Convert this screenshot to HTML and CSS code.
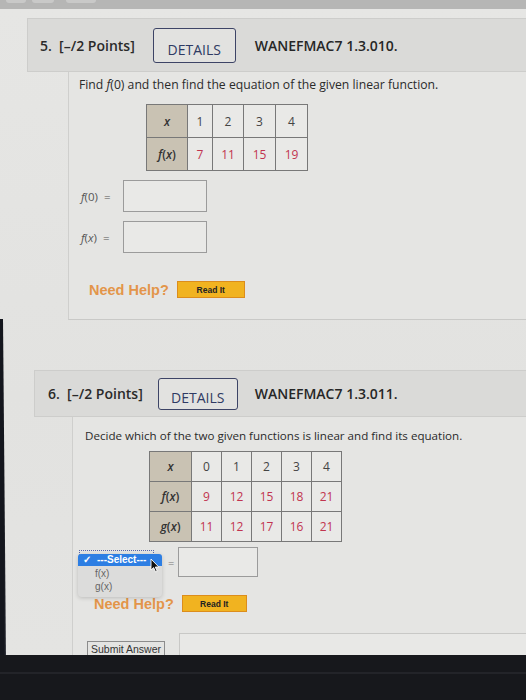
FILE: index.html
```html
<!DOCTYPE html>
<html>
<head>
<meta charset="utf-8">
<link rel="stylesheet" href="styles.css">
</head>
<body>
<div class="screen">
  <div class="topbar">
    <span class="tab t1"></span><span class="tab t2"></span><span class="tab t3"></span>
  </div>
  <div class="page">
    <section class="q q5">
      <div class="qhead">
        <span class="qnum">5.&nbsp; [–/2 Points]</span>
        <span class="details">DETAILS</span>
        <span class="qcode">WANEFMAC7 1.3.010.</span>
      </div>
      <div class="qbody">
        <p class="prompt">Find <i>f</i>(0) and then find the equation of the given linear function.</p>
        <table class="data t5">
          <tr><th><i>x</i></th><td class="n">1</td><td class="n">2</td><td class="n">3</td><td class="n">4</td></tr>
          <tr><th><i>f</i>(<i>x</i>)</th><td>7</td><td>11</td><td>15</td><td>19</td></tr>
        </table>
        <div class="answer a1"><span class="lbl"><i>f</i>(0)&nbsp; =</span><span class="box"></span></div>
        <div class="answer a2"><span class="lbl"><i>f</i>(<i>x</i>)&nbsp; =</span><span class="box"></span></div>
        <div class="help"><span class="need">Need Help?</span><span class="readit">Read It</span></div>
      </div>
    </section>

    <section class="q q6">
      <div class="qhead">
        <span class="qnum">6.&nbsp; [–/2 Points]</span>
        <span class="details">DETAILS</span>
        <span class="qcode">WANEFMAC7 1.3.011.</span>
      </div>
      <div class="qbody">
        <p class="prompt">Decide which of the two given functions is linear and find its equation.</p>
        <table class="data t6">
          <tr><th><i>x</i></th><td class="n">0</td><td class="n">1</td><td class="n">2</td><td class="n">3</td><td class="n">4</td></tr>
          <tr><th><i>f</i>(<i>x</i>)</th><td>9</td><td>12</td><td>15</td><td>18</td><td>21</td></tr>
          <tr><th><i>g</i>(<i>x</i>)</th><td>11</td><td>12</td><td>17</td><td>16</td><td>21</td></tr>
        </table>
        <div class="selrow">
          <span class="selbox">
            <span class="menu">
              <span class="opt sel"><span class="chk">✓</span>---Select---
                <svg class="cursor" width="10" height="15" viewBox="0 0 10 15"><path d="M1 1 L1 12 L3.6 9.6 L5.6 14 L7.2 13.3 L5.3 9 L8.8 9 Z" fill="#111" stroke="#fff" stroke-width="0.9"/></svg>
              </span>
              <span class="opt">f(x)</span>
              <span class="opt">g(x)</span>
            </span>
          </span>
          <span class="eq">=</span>
          <span class="box wide"></span>
        </div>
        <div class="help"><span class="need">Need Help?</span><span class="readit">Read It</span></div>
        <div class="submitrow">
          <span class="submit">Submit Answer</span>
          <span class="notes"></span>
        </div>
      </div>
    </section>
    <span class="leftedge"></span>
  </div>
  <div class="bezel"><span class="bezline"></span></div>
</div>
</body>
</html>
```

FILE: styles.css
```css
html, body {
  margin: 0;
  padding: 0;
  background: #17181c;
}
.screen {
  width: 526px;
  height: 700px;
  overflow: hidden;
  display: flex;
  flex-direction: column;
}
.topbar {
  height: 9px;
  background: #b6b6b5;
  display: flex;
  gap: 6px;
  padding-left: 6px;
  flex-shrink: 0;
}
.tab {
  height: 3px;
  background: #c9c9c8;
  border-radius: 0 0 4px 4px;
}
.t1 { width: 20px; }
.t2 { width: 22px; }
.t3 { width: 30px; margin-left: 6px; }
.page {
  position: relative;
  height: 646px;
  flex-shrink: 0;
  overflow: hidden;
  background: linear-gradient(#e6e6e4, #e2e2e0 60%, #e4e4e2);
  padding-top: 9px;
  box-sizing: border-box;
  font-family: "Open Sans", "Noto Sans", sans-serif;
  color: #222;
}
.leftedge {
  position: absolute;
  left: 0;
  top: 310px;
  bottom: 0;
  width: 6px;
  background: linear-gradient(to right, #14161d 70%, #3a3c44);
  clip-path: polygon(0 0, 50% 0, 100% 100%, 0 100%);
}
.q { display: flex; flex-direction: column; }
.qhead {
  display: flex;
  align-items: center;
  background: #dadad8;
  border: 1px solid #cdcdcb;
  border-right: none;
  box-sizing: border-box;
}
.q5 .qhead { margin-left: 27px; height: 54px; padding-left: 12px; }
.q6 { margin-top: 50px; }
.q6 .qhead { margin-left: 34px; height: 47px; padding-left: 13px; }
.qnum {
  font-weight: 600;
  font-size: 14px;
  color: #2a2a2a;
}
.details {
  margin-left: 18px;
  border: 1.5px solid #3d4466;
  border-radius: 3px;
  background: #e2e2e0;
  color: #2f3a63;
  font-size: 14px;
  width: 80px;
  height: 32px;
  box-sizing: border-box;
  display: flex;
  justify-content: center;
  align-items: flex-end;
  padding-bottom: 2px;
}
.q5 .details { height: 35px; width: 83px; padding-bottom: 3px; }
.q6 .details { margin-left: 15px; }
.qcode {
  margin-left: 19px;
  font-weight: 600;
  font-size: 14px;
  color: #262626;
}
.q6 .qcode { margin-left: 17px; }
.qbody {
  border-left: 1px solid #cfcfcd;
  border-bottom: 1px solid #c9c9c7;
  box-sizing: border-box;
  display: flex;
  flex-direction: column;
  align-items: flex-start;
  background: #e5e5e3;
}
.q5 .qbody { margin-left: 68px; height: 248px; }
.q6 .qbody { margin-left: 72px; height: 260px; border-bottom: none; }
.prompt {
  margin: 0;
  font-size: 12.2px;
  color: #2b2b2b;
}
.q5 .prompt { margin: 4px 0 0 10px; }
.q6 .prompt { margin: 11px 0 0 12px; font-size: 11.6px; }
.data {
  border-collapse: collapse;
  font-size: 12px;
}
.data th, .data td {
  border: 1px solid #787878;
  text-align: center;
  padding: 0;
  font-weight: normal;
}
.data th {
  background: #c9c2b3;
  font-weight: 600;
  color: #333;
}
.data td { background: #e9e9e7; color: #c1344f; }
.data td.n { color: #444; }
.t5 { margin: 11px 0 0 77px; }
.t5 th { width: 40px; height: 32px; }
.t5 td { height: 32px; }
.t5 td:nth-child(2) { width: 24px; }
.t5 td:nth-child(3) { width: 30px; }
.t5 td:nth-child(4) { width: 31px; }
.t5 td:nth-child(5) { width: 31px; }
.t6 { margin: 8px 0 0 76px; }
.t6 th { width: 41px; height: 29px; }
.t6 td { width: 29px; height: 29px; }
.answer {
  display: flex;
  align-items: center;
  margin-left: 12px;
}
.a1 { margin-top: 9px; }
.a2 { margin-top: 9px; }
.lbl {
  width: 42px;
  font-size: 11.5px;
  color: #555;
}
.box {
  width: 84px;
  height: 32px;
  border: 1px solid #9b9b9b;
  background: #e9e9e7;
  box-sizing: border-box;
}
.help {
  display: flex;
  align-items: center;
  gap: 8px;
}
.q5 .help { margin: 28px 0 0 20px; }
.q6 .help { margin: 18px 0 0 21px; }
.need {
  font-family: "Liberation Sans", Arial, sans-serif;
  font-weight: bold;
  font-size: 14.5px;
  color: #e3954a;
}
.readit {
  width: 68px;
  height: 17px;
  box-sizing: border-box;
  background: #f1b320;
  border: 1.5px solid #dc8d1c;
  font-family: "Liberation Sans", Arial, sans-serif;
  font-weight: bold;
  font-size: 8.5px;
  color: #222;
  display: flex;
  align-items: center;
  justify-content: center;
}
.q6 .readit { width: 65px; }
.selrow {
  display: flex;
  align-items: center;
  margin: 5px 0 0 6px;
  position: relative;
}
.selbox {
  width: 75px;
  height: 25px;
  border: 1.5px dotted #5966a8;
  box-sizing: border-box;
  position: relative;
}
.menu {
  position: absolute;
  left: -2px;
  top: 3px;
  width: 84px;
  background: #dcdcdb;
  border-radius: 4px;
  box-shadow: 0 1px 4px rgba(0,0,0,0.18);
  display: flex;
  flex-direction: column;
  font-family: "Liberation Sans", Arial, sans-serif;
  font-size: 10px;
  color: #666;
  padding-bottom: 4px;
  z-index: 2;
}
.opt {
  height: 13px;
  line-height: 13px;
  padding-left: 17px;
  position: relative;
}
.opt.sel {
  background: #2d7ee3;
  color: #fff;
  font-weight: bold;
  border-radius: 3px 3px 0 0;
  padding-left: 19px;
  height: 12px;
  line-height: 12px;
  margin-bottom: 1px;
}
.chk {
  position: absolute;
  left: 5px;
  top: 0;
  font-size: 10px;
}
.cursor {
  position: absolute;
  right: 2px;
  top: 4px;
}
.eq {
  margin-left: 14px;
  font-size: 11px;
  color: #777;
}
.box.wide {
  margin-left: 4px;
  width: 80px;
  height: 30px;
}
.submitrow {
  display: flex;
  align-items: flex-start;
  margin-top: 19px;
  width: 100%;
}
.submit {
  margin: 10px 0 0 14px;
  font-family: "Liberation Sans", Arial, sans-serif;
  font-size: 10.5px;
  line-height: 12px;
  color: #333;
  border: 1px solid #8c8c8c;
  border-bottom: none;
  background: #e4e4e2;
  padding: 1px 3px 3px;
}
.notes {
  margin: 2px 0 0 14px;
  flex: 1;
  height: 26px;
  border: 1px solid #c8c8c6;
  border-right: none;
  background: #e8e8e6;
}
.bezel {
  flex: 1;
  background: #17181c;
  position: relative;
}
.bezline {
  position: absolute;
  left: 0;
  right: 0;
  top: 17px;
  height: 2px;
  background: #232429;
}
```
